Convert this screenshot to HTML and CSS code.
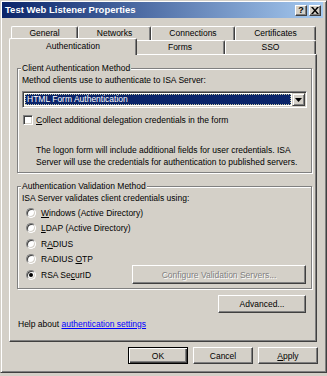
FILE: index.html
```html
<!DOCTYPE html>
<html>
<head>
<meta charset="utf-8">
<link rel="stylesheet" href="styles.css">
</head>
<body>
<div class="window">
  <div class="titlebar">
    <span class="title">Test Web Listener Properties</span>
    <div class="caption-btns">
      <span class="cbtn cbtn-help">?</span>
      <span class="cbtn cbtn-close"><svg width="8" height="7" viewBox="0 0 8 7"><path d="M0 0h2l2 2.4 2-2.4h2l-3 3.5 3 3.5h-2l-2-2.4-2 2.4h-2l3-3.5z" fill="#000"/></svg></span>
    </div>
  </div>
  <div class="tabs">
    <div class="tabrow">
      <div class="tab t-general">General</div>
      <div class="tab t-networks">Networks</div>
      <div class="tab t-connections">Connections</div>
      <div class="tab t-certificates">Certificates</div>
    </div>
    <div class="tabrow">
      <div class="tab t-auth sel">Authentication</div>
      <div class="tab t-forms">Forms</div>
      <div class="tab t-sso">SSO</div>
    </div>
  </div>
  <div class="panel">
    <fieldset class="group g1">
      <legend>Client Authentication Method</legend>
      <div class="line">Method clients use to authenticate to ISA Server:</div>
      <div class="combo">
        <div class="combo-field"><span class="combo-text">HTML Form Authentication</span></div>
        <div class="combo-btn"><svg width="7" height="4" viewBox="0 0 7 4"><path d="M0 0h7l-3.5 4z" fill="#000"/></svg></div>
      </div>
      <div class="check-row"><span class="checkbox"></span><span><u>C</u>ollect additional delegation credentials in the form</span></div>
      <div class="desc">The logon form will include additional fields for user credentials. ISA<br>Server will use the credentials for authentication to published servers.</div>
    </fieldset>
    <fieldset class="group g2">
      <legend>Authentication Validation Method</legend>
      <div class="line">ISA Server validates client credentials using:</div>
      <div class="radios">
        <div class="radio-row"><span class="radio"></span><span><u>W</u>indows (Active Directory)</span></div>
        <div class="radio-row"><span class="radio"></span><span><u>L</u>DAP (Active Directory)</span></div>
        <div class="radio-row"><span class="radio"></span><span>R<u>A</u>DIUS</span></div>
        <div class="radio-row"><span class="radio"></span><span>RADIUS <u>O</u>TP</span></div>
        <div class="radio-row last"><span class="radio checked"></span><span>RSA Se<u>c</u>urID</span><span class="btn disabled btn-config">Configure Validation Servers...</span></div>
      </div>
    </fieldset>
    <span class="btn btn-adv">Advanced...</span>
    <div class="help">Help about <a class="link">authentication settings</a></div>
  </div>
  <div class="buttons">
    <span class="btn default">OK</span>
    <span class="btn">Cancel</span>
    <span class="btn"><u>A</u>pply</span>
  </div>
</div>
</body>
</html>
```

FILE: styles.css
```css
* { box-sizing: border-box; }
html, body { margin: 0; padding: 0; }
body {
  background: #d4d0c8;
  font-family: "Liberation Sans", Arial, sans-serif;
  font-size: 8.5px;
  line-height: 12px;
  color: #000;
  width: 327px;
  height: 376px;
  overflow: hidden;
}
.window {
  width: 327px;
  height: 373px;
  background: #d4d0c8;
  border: 1px solid;
  border-color: #d4d0c8 #404040 #404040 #d4d0c8;
  box-shadow: inset 1px 1px #fff, inset -1px -1px #808080;
  padding: 1px 3px 1px 1px;
  display: flex;
  flex-direction: column;
}
.titlebar {
  height: 16px;
  background: linear-gradient(to right, #0a246a, #a6caf0);
  display: flex;
  align-items: center;
  padding: 0 2px 0 3px;
}
.title {
  flex: 1;
  color: #fff;
  font-weight: bold;
  font-size: 9.5px;
}
.caption-btns { display: flex; gap: 2px; }
.cbtn {
  width: 12px;
  height: 11px;
  background: #d4d0c8;
  border: 1px solid;
  border-color: #fff #404040 #404040 #fff;
  box-shadow: inset -1px -1px #808080;
  display: flex;
  align-items: center;
  justify-content: center;
  font-weight: bold;
  font-size: 9px;
  line-height: 9px;
}
.tabs {
  margin: 8px 0 0 9px;
  display: flex;
  flex-direction: column;
}
.tabrow { display: flex; height: 14px; align-items: flex-start; }
.tab {
  height: 14px;
  background: #d4d0c8;
  border-top: 1px solid #fff;
  border-left: 1px solid #fff;
  border-right: 1px solid #404040;
  box-shadow: inset -1px 0 #808080;
  border-radius: 2px 2px 0 0;
  text-align: center;
  line-height: 12px;
}
.t-general { width: 67px; }
.t-networks { width: 73px; }
.t-connections { width: 84px; }
.t-certificates { width: 81px; }
.t-auth { width: 124px; }
.t-forms { width: 90px; }
.t-sso { width: 91px; }
.tab.sel {
  width: 128px;
  height: 17px;
  margin: -2px -2px -1px -2px;
  padding-top: 1px;
  position: relative;
  z-index: 1;
}
.panel {
  margin-left: 7px;
  width: 308px;
  height: 288px;
  border: 1px solid;
  border-color: #fff #404040 #404040 #fff;
  box-shadow: inset -1px -1px #808080;
  padding: 0 0 0 7px;
  display: flex;
  flex-direction: column;
}
fieldset.group {
  margin: 7px 0 0 0;
  width: 295px;
  min-width: 0;
  border: 1px solid #808080;
  box-shadow: inset 1px 1px #fff, 1px 1px #fff;
  padding: 0 3px 4px 4px;
}
.g2 { margin-top: 12px; }
legend {
  padding: 0 1px;
  margin-left: -1px;
  line-height: 12px;
  background: #d4d0c8;
}
.combo {
  margin-top: 5px;
  width: 285px;
  height: 17px;
  display: flex;
  border: 1px solid;
  border-color: #808080 #fff #fff #808080;
  box-shadow: inset 1px 1px #404040, inset -1px -1px #d4d0c8;
  background: #fff;
  padding: 1px;
}
.combo-field {
  flex: 1;
  margin: 1px;
  background: #0a246a;
  outline: 1px dotted #c8c8a0;
  outline-offset: -1px;
  color: #fff;
  padding-left: 2px;
  line-height: 11px;
}
.combo-btn {
  width: 13px;
  background: #d4d0c8;
  border: 1px solid;
  border-color: #d4d0c8 #404040 #404040 #d4d0c8;
  box-shadow: inset 1px 1px #fff, inset -1px -1px #808080;
  display: flex;
  align-items: center;
  justify-content: center;
}
.check-row {
  margin-top: 6px;
  height: 12px;
  display: flex;
  align-items: center;
  gap: 3px;
}
.checkbox, .radio {
  width: 10px;
  height: 10px;
  background: #fff;
  border: 1px solid;
  border-color: #808080 #fff #fff #808080;
  box-shadow: inset 1px 1px #404040, inset -1px -1px #d4d0c8;
  margin-left: 1px;
  flex: none;
}
.desc { margin-top: 18px; padding-left: 14px; }
.radios { margin-top: 1px; display: flex; flex-direction: column; }
.radio-row {
  height: 15.5px;
  display: flex;
  align-items: center;
  gap: 5px;
}
.radio-row.last { height: 19px; margin-top: -2px; }
.radio {
  border-radius: 50%;
  margin-left: 4px;
  display: flex;
  align-items: center;
  justify-content: center;
}
.radio.checked::after {
  content: "";
  width: 4px;
  height: 4px;
  border-radius: 50%;
  background: #000;
}
.btn {
  width: 60px;
  height: 17px;
  background: #d4d0c8;
  border: 1px solid;
  border-color: #fff #404040 #404040 #fff;
  box-shadow: inset -1px -1px #808080;
  display: flex;
  align-items: center;
  justify-content: center;
  flex: none;
}
.btn.default {
  border-color: #000;
  box-shadow: inset 1px 1px #fff, inset -1px -1px #404040, inset -2px -2px #808080;
}
.btn.disabled { color: #808080; text-shadow: 1px 1px #fff; }
.btn-config { width: 174px; height: 19px; margin-left: auto; margin-right: 2px; }
.btn-adv { width: 88px; height: 18px; align-self: flex-end; margin: 6px 10px 0 0; }
.help { margin: 5px 0 0 1px; }
.link { color: #0000ff; text-decoration: underline; }
.buttons {
  display: flex;
  justify-content: flex-end;
  gap: 5px;
  margin-top: 5px;
  padding-right: 5px;
}
```
